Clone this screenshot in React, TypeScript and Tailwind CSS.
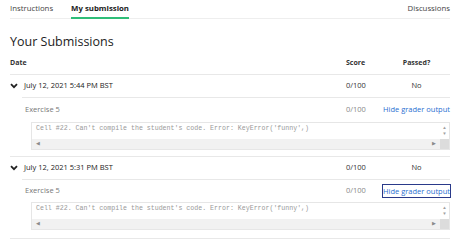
import React from "react";

function Chevron() {
  return (
    <svg width="8" height="6" viewBox="0 0 8 6" className="mr-[6px]">
      <path d="M1 1.2 L4 4.2 L7 1.2" fill="none" stroke="#222" strokeWidth="1.8" />
    </svg>
  );
}

function CodeBox() {
  return (
    <div className="ml-[9px] h-[28px] border border-[#e6e6e6] flex flex-col">
      <div className="flex flex-1">
        <div className="flex-1 pl-[4px] pt-[2px] font-['Liberation_Mono'] text-[6.6px] text-[#999999] leading-[8px] whitespace-nowrap overflow-hidden">
          Cell #22. Can't compile the student's code. Error: KeyError('funny',)
        </div>
        <div className="w-[9px] flex flex-col items-center text-[#a0a0a0] text-[4.5px] leading-[6px] pt-[1px]">
          <span>▲</span>
          <span>▼</span>
        </div>
      </div>
      <div className="flex h-[10px]">
        <div className="flex-1 bg-[#f1f1f1] flex items-center justify-between px-[4px] text-[#8a8a8a] text-[5px]">
          <span>◀</span>
          <span>▶</span>
        </div>
        <div className="w-[9px] bg-[#dcdcdc]"></div>
      </div>
    </div>
  );
}

function Submission({ date, focused, last }: { date: string; focused?: boolean; last?: boolean }) {
  return (
    <div className="border-b border-[#e8e8e8]">
      <div className="ml-[12px] flex items-center h-[23px] border-b border-[#e8e8e8]">
        <div className="flex-1 flex items-center -ml-[12px] text-[#222]">
          <Chevron />
          <span>{date}</span>
        </div>
        <div className="w-[37px] text-[#333]">0/100</div>
        <div className="w-[67px] text-center text-[#333]">No</div>
      </div>
      <div className="ml-[12px]">
        <div className={"flex items-center " + (last ? "h-[21px]" : "h-[23px]")}>
          <div className="flex-1 pl-[3px] text-[#777]">Exercise 5</div>
          <div className="w-[37px] text-[#888]">0/100</div>
          <div
            className={
              "w-[67px] text-center text-[#2a6fd1] whitespace-nowrap " +
              (focused ? "outline outline-1 outline-[#2a3a8a] leading-[12px]" : "")
            }
          >
            Hide grader output
          </div>
        </div>
        <div className={"pt-[1px] " + (last ? "pb-[8px]" : "pb-[6px]")}>
          <CodeBox />
        </div>
      </div>
    </div>
  );
}

export default function App() {
  return (
    <div className="w-[474px] h-[245px] bg-white overflow-hidden font-['Open_Sans'] text-[7.5px]">
      <div className="ml-[10px] w-[440px]">
        <div className="flex h-[19px] border-b border-[#eeeeee] text-[7.8px]">
          <div className="pt-[3px] text-[#444] mr-[18px]">Instructions</div>
          <div className="pt-[3px] font-bold text-[#222] border-b-2 border-[#2ebd78] h-[19px]">My submission</div>
          <div className="flex-1"></div>
          <div className="pt-[3px] text-[#444]">Discussions</div>
        </div>
        <div className="pt-[14px] h-[34px] text-[12.5px] leading-[18px] text-[#222]">Your Submissions</div>
        <div className="flex items-center h-[22px] border-b border-[#e8e8e8] font-bold text-[#333] text-[7px]">
          <div className="flex-1">Date</div>
          <div className="w-[37px]">Score</div>
          <div className="w-[67px] text-center">Passed?</div>
        </div>
        <Submission date="July 12, 2021 5:44 PM BST" />
        <Submission date="July 12, 2021 5:31 PM BST" focused last />
      </div>
    </div>
  );
}
